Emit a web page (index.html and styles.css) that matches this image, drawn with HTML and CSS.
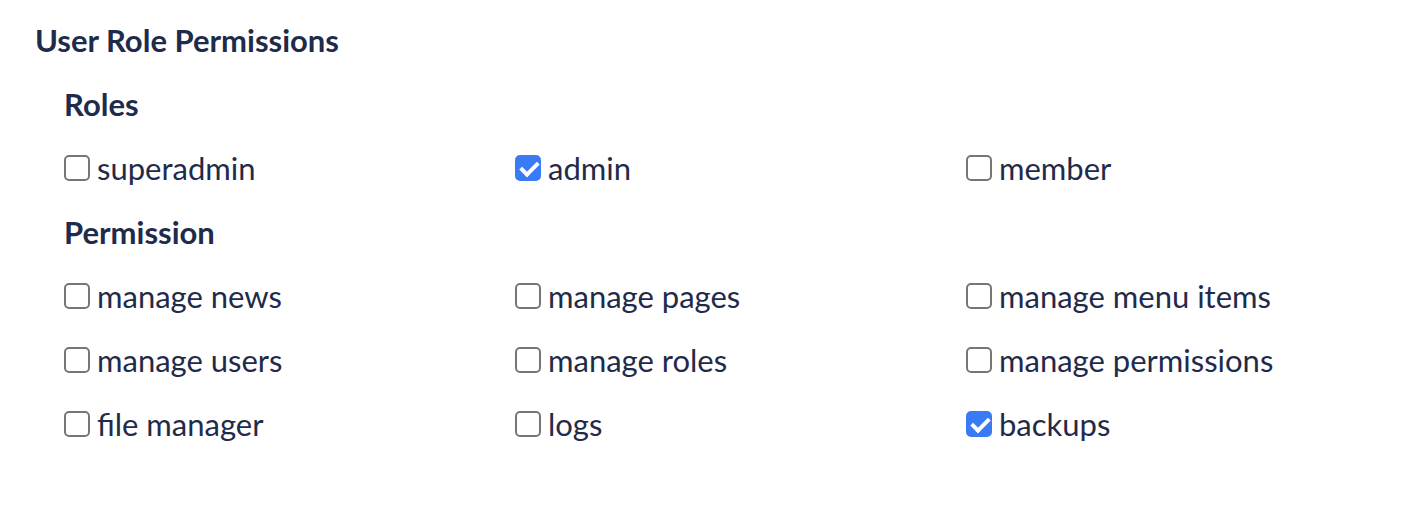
FILE: index.html
```html
<!DOCTYPE html>
<html lang="en">
<head>
  <meta charset="UTF-8">
  <meta name="viewport" content="width=device-width, initial-scale=1.0">
  <title>User Role Permissions</title>
  <link rel="stylesheet" href="styles.css">
</head>
<body>
  <div class="panel">
    <h2 class="panel-title">User Role Permissions</h2>

    <div class="section">
      <h3 class="section-title">Roles</h3>
      <div class="check-grid">
        <label class="check"><input type="checkbox"> superadmin</label>
        <label class="check"><input type="checkbox" checked> admin</label>
        <label class="check"><input type="checkbox"> member</label>
      </div>

      <h3 class="section-title">Permission</h3>
      <div class="check-grid">
        <label class="check"><input type="checkbox"> manage news</label>
        <label class="check"><input type="checkbox"> manage pages</label>
        <label class="check"><input type="checkbox"> manage menu items</label>
        <label class="check"><input type="checkbox"> manage users</label>
        <label class="check"><input type="checkbox"> manage roles</label>
        <label class="check"><input type="checkbox"> manage permissions</label>
        <label class="check"><input type="checkbox"> file manager</label>
        <label class="check"><input type="checkbox"> logs</label>
        <label class="check"><input type="checkbox" checked> backups</label>
      </div>
    </div>
  </div>
</body>
</html>
```

FILE: styles.css
```css
body {
  margin: 0;
  background: #fff;
  color: #1f2b4a;
  font-family: Lato, "Noto Sans", sans-serif;
}

.panel {
  padding: 8px 35px 0;
}

.panel-title {
  margin: 0;
  height: 64px;
  line-height: 64px;
  font-size: 31px;
  font-weight: 700;
}

.section {
  padding-left: 29px;
}

.section-title {
  margin: 0;
  height: 64px;
  line-height: 64px;
  font-size: 31px;
  font-weight: 700;
}

.check-grid {
  display: grid;
  grid-template-columns: repeat(3, 451px);
}

.check {
  display: flex;
  align-items: center;
  height: 64px;
  font-size: 31px;
  cursor: pointer;
}

.check input {
  appearance: none;
  -webkit-appearance: none;
  position: relative;
  flex: none;
  width: 26px;
  height: 26px;
  margin: 0 7px 0 0;
  border: 2px solid #767676;
  border-radius: 5px;
  background: #fff;
  cursor: pointer;
}

.check input:checked {
  border-color: #3a7bf5;
  background: #3a7bf5;
}

.check input:checked::after {
  content: "";
  position: absolute;
  left: 7px;
  top: 1px;
  width: 7px;
  height: 14px;
  border: solid #fff;
  border-width: 0 4px 4px 0;
  transform: rotate(45deg);
}
```
